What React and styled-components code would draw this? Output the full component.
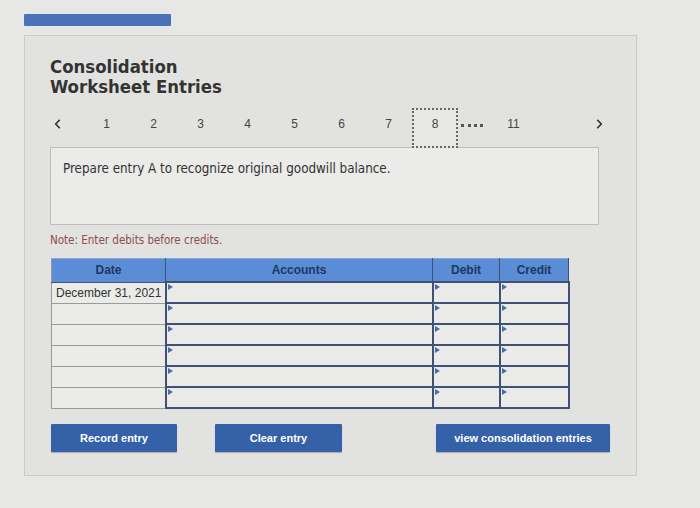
import { createGlobalStyle, styled } from "styled-components";
import { ChevronLeft, ChevronRight } from "lucide-react";

const GlobalStyle = createGlobalStyle`
  body {
    margin: 0;
    background: #e7e7e5;
    font-family: "Liberation Sans", Arial, sans-serif;
  }
`;

const Page = styled.div`
  padding: 14px 0 0 24px;
  width: 676px;
  height: 494px;
`;

const TopBar = styled.div`
  width: 147px;
  height: 12px;
  background: #4a72b8;
  border-radius: 1px;
  margin-bottom: 9px;
`;

const Panel = styled.div`
  box-sizing: border-box;
  width: 613px;
  height: 441px;
  border: 1px solid #cacac8;
  background: #e2e2e0;
  padding: 21px 0 0 25px;
`;

const Title = styled.h1`
  margin: 0;
  font-family: "DejaVu Sans Condensed", "DejaVu Sans", sans-serif;
  font-weight: bold;
  font-size: 18.4px;
  line-height: 20px;
  color: #333;
`;

const Pager = styled.div`
  display: flex;
  align-items: center;
  width: 557px;
  height: 40px;
  margin-top: 11px;
  color: #444;
  font-size: 12px;
`;

const Arrow = styled.div`
  width: 15px;
  display: flex;
  justify-content: center;
  color: #2e2e2e;
  padding-bottom: 8px;
  margin-right: ${(p) => (p.$prev ? "18px" : "0")};
  margin-left: ${(p) => (p.$prev ? "0" : "auto")};
`;

const PageItem = styled.div`
  box-sizing: border-box;
  width: ${(p) => (p.$current ? "46px" : "47px")};
  height: 40px;
  padding-bottom: 8px;
  display: flex;
  align-items: center;
  justify-content: center;
  border: ${(p) => (p.$current ? "2px dotted #666" : "none")};
  background: ${(p) => (p.$current ? "#e8e8e6" : "transparent")};
  margin-left: ${(p) => p.$gap || "0"};
`;

const Dots = styled.span`
  width: 22px;
  margin: 0 0 6px 3px;
  border-top: 3px dotted #555;
`;

const Prompt = styled.div`
  box-sizing: border-box;
  width: 549px;
  height: 78px;
  margin-top: -1px;
  border: 1px solid #bebebc;
  background: #ebebe9;
  padding: 13px 12px;
  font-family: "DejaVu Sans Condensed", "DejaVu Sans", sans-serif;
  font-size: 13.3px;
  color: #333;
`;

const Note = styled.div`
  margin-top: 8px;
  font-family: "DejaVu Sans Condensed", "DejaVu Sans", sans-serif;
  font-size: 11.5px;
  line-height: 14px;
  color: #8a4f4f;
`;

const Table = styled.table`
  margin: 11px 0 0 1px;
  border-collapse: collapse;
  table-layout: fixed;
  width: 517px;
  font-size: 12px;
`;

const Th = styled.th`
  height: 22px;
  padding: 0;
  background: #5a8dd6;
  color: #1f3763;
  font-weight: bold;
  border: 1px solid #3f5274;
  border-top-color: #8aa8d8;
  border-left-color: ${(p) => (p.$first ? "#9a9a9a" : "#3f5274")};
`;

const DateCell = styled.td`
  height: 20px;
  padding: 0 0 0 4px;
  background: #ebebe9;
  color: #333;
  border: 1px solid #9a9a9a;
  border-right: 2px solid #3f5274;
  white-space: nowrap;
`;

const InputCell = styled.td`
  position: relative;
  height: 18px;
  padding: 0;
  background: #eaeae8;
  border: 2px solid #3f5274;

  &::before {
    content: "";
    position: absolute;
    left: 1px;
    top: 1px;
    border-left: 5px solid #4a6bb0;
    border-top: 3px solid transparent;
    border-bottom: 3px solid transparent;
  }
`;

const ButtonRow = styled.div`
  display: flex;
  align-items: center;
  margin: 15px 0 0 1px;
  gap: 38px;
`;

const Button = styled.button`
  height: 28px;
  width: ${(p) => p.$w}px;
  margin-left: ${(p) => p.$push || 0}px;
  border: none;
  border-radius: 1px;
  background: #3561a9;
  color: #fff;
  font-family: "Liberation Sans", Arial, sans-serif;
  font-weight: bold;
  font-size: 11px;
  box-shadow: 0 1px 1px rgba(0, 0, 0, 0.25);
`;

const rows = ["December 31, 2021", "", "", "", "", ""];

export default function App() {
  return (
    <>
      <GlobalStyle />
      <Page>
        <TopBar />
        <Panel>
          <Title>
            Consolidation
            <br />
            Worksheet Entries
          </Title>
          <Pager>
            <Arrow $prev>
              <ChevronLeft size={22} strokeWidth={2.6} />
            </Arrow>
            {[1, 2, 3, 4, 5, 6, 7].map((n) => (
              <PageItem key={n}>{n}</PageItem>
            ))}
            <PageItem $current>8</PageItem>
            <Dots />
            <PageItem $gap="7px">11</PageItem>
            <Arrow>
              <ChevronRight size={22} strokeWidth={2.6} />
            </Arrow>
          </Pager>
          <Prompt>Prepare entry A to recognize original goodwill balance.</Prompt>
          <Note>Note: Enter debits before credits.</Note>
          <Table>
            <colgroup>
              <col style={{ width: 114 }} />
              <col style={{ width: 267 }} />
              <col style={{ width: 67 }} />
              <col style={{ width: 69 }} />
            </colgroup>
            <thead>
              <tr>
                <Th $first>Date</Th>
                <Th>Accounts</Th>
                <Th>Debit</Th>
                <Th>Credit</Th>
              </tr>
            </thead>
            <tbody>
              {rows.map((d, i) => (
                <tr key={i}>
                  <DateCell>{d}</DateCell>
                  <InputCell />
                  <InputCell />
                  <InputCell />
                </tr>
              ))}
            </tbody>
          </Table>
          <ButtonRow>
            <Button $w={126}>Record entry</Button>
            <Button $w={127}>Clear entry</Button>
            <Button $w={174} $push={56}>
              view consolidation entries
            </Button>
          </ButtonRow>
        </Panel>
      </Page>
    </>
  );
}
